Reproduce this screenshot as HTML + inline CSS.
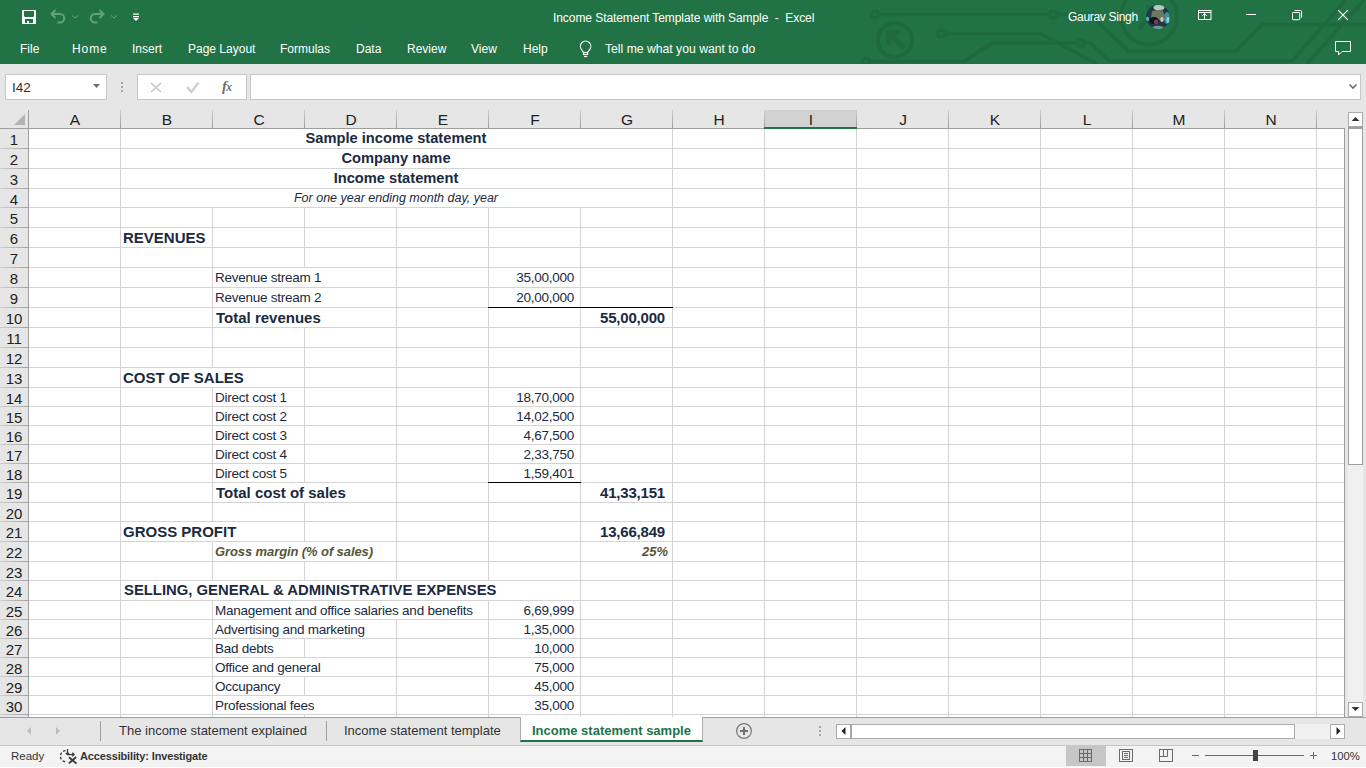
<!DOCTYPE html><html><head><meta charset="utf-8"><style>
*{margin:0;padding:0;box-sizing:border-box}
html,body{width:1366px;height:768px;overflow:hidden;background:#fff;font-family:"Liberation Sans",sans-serif}
.a{position:absolute}
.t{position:absolute;white-space:nowrap}
.rib{color:#fff;font-size:12px}
.cell{color:#1a2a40;font-size:13.5px;letter-spacing:-0.25px}
.cell.b{letter-spacing:0}
.b{font-weight:bold}
.i{font-style:italic}
.hdr{position:absolute;color:#222;font-size:15px;text-align:center}
</style></head><body>
<div class="a" style="left:0;top:0;width:1366px;height:64px;background:#217346"></div>
<svg class="a" style="left:0;top:0" width="1366" height="64" viewBox="0 0 1366 64">
<g fill="none" stroke="#1e693f" stroke-width="3.6">
<path d="M879 14.5 H1049"/><circle cx="875" cy="14.5" r="3.5"/><circle cx="1053" cy="14.5" r="3.5"/>
<path d="M1057 14.5 H1090 L1129 51.5 H1236 L1262 24.5 H1366"/>
<circle cx="895" cy="40" r="17" stroke-width="3.8"/>
<path d="M945 33.5 H1040 L1097 64"/><circle cx="941" cy="33.5" r="3.5"/>
<path d="M870 61.5 H964 L992 43 H1077"/><circle cx="866" cy="61.5" r="3.5"/><circle cx="1081" cy="43" r="3.5"/>
<path d="M1085 43 H1090 L1110 61 H1292 L1346 0"/>
<circle cx="1149" cy="16.5" r="28" stroke-width="3.8"/>
<path d="M1364 0 L1307 64"/>
<path d="M1139 29 L1156 8 M1146 7 H1157 V18" stroke-width="4"/>
</g>
<g fill="#1e693f"><path d="M886 30 L900 30 L900 35 L895 35 L906 46 L902 50 L891 39 L891 44 L886 44 Z"/></g>
</svg>
<svg class="a" style="left:22px;top:10px" width="14" height="14" viewBox="0 0 14 14">
<rect x="0" y="0" width="14" height="14" fill="#fff" rx="0.8"/>
<path d="M2 1 H12 V6 L11 7 H3 L2 6 Z" fill="#217346"/>
<rect x="3" y="9" width="8" height="4" fill="#217346"/>
<rect x="5" y="11" width="2" height="2" fill="#fff"/>
</svg>
<svg class="a" style="left:50px;top:9px" width="70" height="16" viewBox="0 0 70 16">
<g fill="none" stroke="#64a27e" stroke-width="2">
<path d="M1.5 5 H10 A4.25 4.25 0 0 1 10 13.5 H7.5"/><path d="M5.5 1 L1.5 5 L5.5 9"/>
<path d="M22 6.5 L25 9 L28 6.5" stroke-width="1"/>
<path d="M53.5 5 H45 A4.25 4.25 0 0 0 45 13.5 H47.5"/><path d="M49.5 1 L53.5 5 L49.5 9"/>
<path d="M61 6.5 L64 9 L67 6.5" stroke-width="1"/>
</g></svg>
<svg class="a" style="left:132px;top:13px" width="8" height="8" viewBox="0 0 8 8">
<rect x="1" y="0.5" width="6" height="1.2" fill="#fff"/><rect x="1" y="3" width="6" height="1.2" fill="#fff"/>
<path d="M1 5 H7 L4 8 Z" fill="#fff"/></svg>
<div class="t rib" style="left:553px;top:11px;font-size:12px;letter-spacing:-0.07px">Income Statement Template with Sample&nbsp; - &nbsp;Excel</div>
<div class="t rib" style="left:1068px;top:10px;font-size:12px;letter-spacing:-0.3px">Gaurav Singh</div>
<svg class="a" style="left:1146px;top:5px" width="24" height="24" viewBox="0 0 24 24">
<defs><clipPath id="avc"><circle cx="12" cy="12" r="11.9"/></clipPath><filter id="avb" x="-10%" y="-10%" width="120%" height="120%"><feGaussianBlur stdDeviation="0.7"/></filter></defs>
<g clip-path="url(#avc)"><g filter="url(#avb)">
<rect x="0" y="0" width="24" height="24" fill="#1d3b44"/>
<ellipse cx="21" cy="13" rx="3" ry="6" fill="#3f8f9c"/>
<ellipse cx="22" cy="15" rx="1.6" ry="3" fill="#7fd8e4"/>
<ellipse cx="13" cy="2.5" rx="5.5" ry="3.2" fill="#b9c3cb"/>
<path d="M6 6 L16 4.5 L19.5 12 L14 15 L5 13 Z" fill="#6b7860"/>
<ellipse cx="8" cy="15.5" rx="4.5" ry="3.5" fill="#0e1419"/>
<ellipse cx="10" cy="17" rx="2.2" ry="2.4" fill="#8b3352"/>
<ellipse cx="16" cy="14.5" rx="1.7" ry="2.6" fill="#d9cbb3"/>
<ellipse cx="1.5" cy="14" rx="1.6" ry="2.2" fill="#5cb0bc"/>
<ellipse cx="12" cy="23" rx="6" ry="2.2" fill="#6a9a92"/>
</g></g></svg>
<svg class="a" style="left:1190px;top:0" width="176" height="64" viewBox="1190 0 176 64">
<g fill="none" stroke="#fff" stroke-width="1">
<rect x="1198.5" y="10.5" width="12.5" height="9"/><path d="M1198.5 12.5 H1211"/><path d="M1204.5 19.5 V13.5 M1202.2 15.9 L1204.5 13.6 L1206.8 15.9"/>
<path d="M1246 14.5 H1256"/>
<rect x="1292.5" y="12.5" width="7.2" height="7.2" rx="0.6"/><path d="M1294.5 10.5 H1300.5 Q1301.6 10.5 1301.6 11.6 V17.8"/>
<path d="M1338.2 10.2 L1347.8 19.8 M1347.8 10.2 L1338.2 19.8" stroke-width="1.2"/>
<path d="M1335.5 41.5 H1350.5 V51.5 H1342 L1338.5 55 V51.5 H1335.5 Z"/>
</g></svg>
<div class="t rib" style="left:20px;top:42px;letter-spacing:0px">File</div>
<div class="t rib" style="left:72px;top:42px;letter-spacing:0.9px">Home</div>
<div class="t rib" style="left:132px;top:42px;letter-spacing:0px">Insert</div>
<div class="t rib" style="left:188px;top:42px;letter-spacing:0px">Page Layout</div>
<div class="t rib" style="left:280px;top:42px;letter-spacing:0px">Formulas</div>
<div class="t rib" style="left:356px;top:42px;letter-spacing:0px">Data</div>
<div class="t rib" style="left:407px;top:42px;letter-spacing:0px">Review</div>
<div class="t rib" style="left:471px;top:42px;letter-spacing:0px">View</div>
<div class="t rib" style="left:523px;top:42px;letter-spacing:0px">Help</div>
<svg class="a" style="left:570px;top:36px" width="30" height="26" viewBox="570 36 30 26">
<g fill="none" stroke="#fff" stroke-width="1.15"><path d="M583.5 52.5 L581.6 49.6 A5.2 5.2 0 1 1 589.6 49.6 L587.6 52.5 Z"/><rect x="583.5" y="52.5" width="4.1" height="2"/><path d="M584 56.5 H587.2"/></g></svg>
<div class="t rib" style="left:605px;top:42px;font-size:12.2px">Tell me what you want to do</div>
<div class="a" style="left:0;top:64px;width:1366px;height:46px;background:#e6e6e6"></div>
<div class="a" style="left:5px;top:74px;width:102px;height:26px;background:#fff;border:1px solid #c6c6c6"></div>
<div class="t" style="left:12px;top:80px;font-size:13.5px;color:#333">I42</div>
<svg class="a" style="left:93px;top:84px" width="8" height="5" viewBox="0 0 8 5"><path d="M0 0 H7 L3.5 4 Z" fill="#6d6d6d"/></svg>
<div class="a" style="left:121px;top:82px;width:2px;height:2px;background:#a6a6a6"></div>
<div class="a" style="left:121px;top:86px;width:2px;height:2px;background:#a6a6a6"></div>
<div class="a" style="left:121px;top:90px;width:2px;height:2px;background:#a6a6a6"></div>
<div class="a" style="left:137px;top:74px;width:110px;height:26px;background:#fff;border:1px solid #c6c6c6"></div>
<svg class="a" style="left:148px;top:80px" width="90" height="15" viewBox="148 80 90 15">
<g fill="none" stroke="#c3c3c3" stroke-width="1.4"><path d="M151 83 L161 92 M161 83 L151 92"/>
<path d="M187 87 L191.5 92 L198.5 82.5" stroke-width="2.2" stroke="#cdcdcd"/></g></svg>
<div class="t" style="left:222px;top:78px;font-family:'Liberation Serif',serif;font-style:italic;font-size:15px;color:#707070;font-weight:bold;letter-spacing:-0.8px">f<span style="font-size:11.5px">x</span></div>
<div class="a" style="left:250px;top:74px;width:1111px;height:26px;background:#fff;border:1px solid #c6c6c6"></div>
<svg class="a" style="left:1348px;top:83px" width="10" height="8" viewBox="0 0 10 8"><path d="M1.5 1.5 L5 5 L8.5 1.5" fill="none" stroke="#6d6d6d" stroke-width="1.6"/></svg>
<div class="a" style="left:0;top:110px;width:1344px;height:18px;background:#e6e6e6"></div>
<div class="a" style="left:0;top:128px;width:28px;height:589px;background:#e6e6e6"></div>
<div class="a" style="left:29px;top:129px;width:1315px;height:588px;background:#fff"></div>
<svg class="a" style="left:14px;top:114px" width="12" height="12" viewBox="0 0 12 12"><path d="M11 0 V11 H0 Z" fill="#b4b4b4"/></svg>
<div class="a" style="left:765px;top:110px;width:91px;height:17px;background:#d2d2d2"></div>
<svg class="a" style="left:0;top:0" width="1366" height="768" viewBox="0 0 1366 768">
<rect x="29" y="148" width="1315" height="1" fill="#d4d4d4"/>
<rect x="29" y="168" width="1315" height="1" fill="#d4d4d4"/>
<rect x="29" y="188" width="1315" height="1" fill="#d4d4d4"/>
<rect x="29" y="207" width="1315" height="1" fill="#d4d4d4"/>
<rect x="29" y="227" width="1315" height="1" fill="#d4d4d4"/>
<rect x="29" y="247" width="1315" height="1" fill="#d4d4d4"/>
<rect x="29" y="267" width="1315" height="1" fill="#d4d4d4"/>
<rect x="29" y="287" width="1315" height="1" fill="#d4d4d4"/>
<rect x="29" y="307" width="1315" height="1" fill="#d4d4d4"/>
<rect x="29" y="327" width="1315" height="1" fill="#d4d4d4"/>
<rect x="29" y="347" width="1315" height="1" fill="#d4d4d4"/>
<rect x="29" y="367" width="1315" height="1" fill="#d4d4d4"/>
<rect x="29" y="387" width="1315" height="1" fill="#d4d4d4"/>
<rect x="29" y="406" width="1315" height="1" fill="#d4d4d4"/>
<rect x="29" y="425" width="1315" height="1" fill="#d4d4d4"/>
<rect x="29" y="444" width="1315" height="1" fill="#d4d4d4"/>
<rect x="29" y="463" width="1315" height="1" fill="#d4d4d4"/>
<rect x="29" y="482" width="1315" height="1" fill="#d4d4d4"/>
<rect x="29" y="502" width="1315" height="1" fill="#d4d4d4"/>
<rect x="29" y="521" width="1315" height="1" fill="#d4d4d4"/>
<rect x="29" y="541" width="1315" height="1" fill="#d4d4d4"/>
<rect x="29" y="561" width="1315" height="1" fill="#d4d4d4"/>
<rect x="29" y="580" width="1315" height="1" fill="#d4d4d4"/>
<rect x="29" y="600" width="1315" height="1" fill="#d4d4d4"/>
<rect x="29" y="619" width="1315" height="1" fill="#d4d4d4"/>
<rect x="29" y="638" width="1315" height="1" fill="#d4d4d4"/>
<rect x="29" y="657" width="1315" height="1" fill="#d4d4d4"/>
<rect x="29" y="676" width="1315" height="1" fill="#d4d4d4"/>
<rect x="29" y="695" width="1315" height="1" fill="#d4d4d4"/>
<rect x="29" y="714" width="1315" height="1" fill="#d4d4d4"/>
<rect x="120" y="129" width="1" height="19" fill="#d4d4d4"/>
<rect x="120" y="149" width="1" height="19" fill="#d4d4d4"/>
<rect x="120" y="169" width="1" height="19" fill="#d4d4d4"/>
<rect x="120" y="189" width="1" height="18" fill="#d4d4d4"/>
<rect x="120" y="208" width="1" height="19" fill="#d4d4d4"/>
<rect x="120" y="228" width="1" height="19" fill="#d4d4d4"/>
<rect x="120" y="248" width="1" height="19" fill="#d4d4d4"/>
<rect x="120" y="268" width="1" height="19" fill="#d4d4d4"/>
<rect x="120" y="288" width="1" height="19" fill="#d4d4d4"/>
<rect x="120" y="308" width="1" height="19" fill="#d4d4d4"/>
<rect x="120" y="328" width="1" height="19" fill="#d4d4d4"/>
<rect x="120" y="348" width="1" height="19" fill="#d4d4d4"/>
<rect x="120" y="368" width="1" height="19" fill="#d4d4d4"/>
<rect x="120" y="388" width="1" height="18" fill="#d4d4d4"/>
<rect x="120" y="407" width="1" height="18" fill="#d4d4d4"/>
<rect x="120" y="426" width="1" height="18" fill="#d4d4d4"/>
<rect x="120" y="445" width="1" height="18" fill="#d4d4d4"/>
<rect x="120" y="464" width="1" height="18" fill="#d4d4d4"/>
<rect x="120" y="483" width="1" height="19" fill="#d4d4d4"/>
<rect x="120" y="503" width="1" height="18" fill="#d4d4d4"/>
<rect x="120" y="522" width="1" height="19" fill="#d4d4d4"/>
<rect x="120" y="542" width="1" height="19" fill="#d4d4d4"/>
<rect x="120" y="562" width="1" height="18" fill="#d4d4d4"/>
<rect x="120" y="581" width="1" height="19" fill="#d4d4d4"/>
<rect x="120" y="601" width="1" height="18" fill="#d4d4d4"/>
<rect x="120" y="620" width="1" height="18" fill="#d4d4d4"/>
<rect x="120" y="639" width="1" height="18" fill="#d4d4d4"/>
<rect x="120" y="658" width="1" height="18" fill="#d4d4d4"/>
<rect x="120" y="677" width="1" height="18" fill="#d4d4d4"/>
<rect x="120" y="696" width="1" height="18" fill="#d4d4d4"/>
<rect x="120" y="715" width="1" height="2" fill="#d4d4d4"/>
<rect x="212" y="208" width="1" height="19" fill="#d4d4d4"/>
<rect x="212" y="228" width="1" height="19" fill="#d4d4d4"/>
<rect x="212" y="248" width="1" height="19" fill="#d4d4d4"/>
<rect x="212" y="268" width="1" height="19" fill="#d4d4d4"/>
<rect x="212" y="288" width="1" height="19" fill="#d4d4d4"/>
<rect x="212" y="308" width="1" height="19" fill="#d4d4d4"/>
<rect x="212" y="328" width="1" height="19" fill="#d4d4d4"/>
<rect x="212" y="348" width="1" height="19" fill="#d4d4d4"/>
<rect x="212" y="388" width="1" height="18" fill="#d4d4d4"/>
<rect x="212" y="407" width="1" height="18" fill="#d4d4d4"/>
<rect x="212" y="426" width="1" height="18" fill="#d4d4d4"/>
<rect x="212" y="445" width="1" height="18" fill="#d4d4d4"/>
<rect x="212" y="464" width="1" height="18" fill="#d4d4d4"/>
<rect x="212" y="483" width="1" height="19" fill="#d4d4d4"/>
<rect x="212" y="503" width="1" height="18" fill="#d4d4d4"/>
<rect x="212" y="542" width="1" height="19" fill="#d4d4d4"/>
<rect x="212" y="562" width="1" height="18" fill="#d4d4d4"/>
<rect x="212" y="601" width="1" height="18" fill="#d4d4d4"/>
<rect x="212" y="620" width="1" height="18" fill="#d4d4d4"/>
<rect x="212" y="639" width="1" height="18" fill="#d4d4d4"/>
<rect x="212" y="658" width="1" height="18" fill="#d4d4d4"/>
<rect x="212" y="677" width="1" height="18" fill="#d4d4d4"/>
<rect x="212" y="696" width="1" height="18" fill="#d4d4d4"/>
<rect x="212" y="715" width="1" height="2" fill="#d4d4d4"/>
<rect x="304" y="208" width="1" height="19" fill="#d4d4d4"/>
<rect x="304" y="228" width="1" height="19" fill="#d4d4d4"/>
<rect x="304" y="248" width="1" height="19" fill="#d4d4d4"/>
<rect x="304" y="328" width="1" height="19" fill="#d4d4d4"/>
<rect x="304" y="348" width="1" height="19" fill="#d4d4d4"/>
<rect x="304" y="368" width="1" height="19" fill="#d4d4d4"/>
<rect x="304" y="388" width="1" height="18" fill="#d4d4d4"/>
<rect x="304" y="407" width="1" height="18" fill="#d4d4d4"/>
<rect x="304" y="426" width="1" height="18" fill="#d4d4d4"/>
<rect x="304" y="445" width="1" height="18" fill="#d4d4d4"/>
<rect x="304" y="464" width="1" height="18" fill="#d4d4d4"/>
<rect x="304" y="503" width="1" height="18" fill="#d4d4d4"/>
<rect x="304" y="522" width="1" height="19" fill="#d4d4d4"/>
<rect x="304" y="562" width="1" height="18" fill="#d4d4d4"/>
<rect x="304" y="639" width="1" height="18" fill="#d4d4d4"/>
<rect x="304" y="677" width="1" height="18" fill="#d4d4d4"/>
<rect x="304" y="715" width="1" height="2" fill="#d4d4d4"/>
<rect x="396" y="208" width="1" height="19" fill="#d4d4d4"/>
<rect x="396" y="228" width="1" height="19" fill="#d4d4d4"/>
<rect x="396" y="248" width="1" height="19" fill="#d4d4d4"/>
<rect x="396" y="268" width="1" height="19" fill="#d4d4d4"/>
<rect x="396" y="288" width="1" height="19" fill="#d4d4d4"/>
<rect x="396" y="308" width="1" height="19" fill="#d4d4d4"/>
<rect x="396" y="328" width="1" height="19" fill="#d4d4d4"/>
<rect x="396" y="348" width="1" height="19" fill="#d4d4d4"/>
<rect x="396" y="368" width="1" height="19" fill="#d4d4d4"/>
<rect x="396" y="388" width="1" height="18" fill="#d4d4d4"/>
<rect x="396" y="407" width="1" height="18" fill="#d4d4d4"/>
<rect x="396" y="426" width="1" height="18" fill="#d4d4d4"/>
<rect x="396" y="445" width="1" height="18" fill="#d4d4d4"/>
<rect x="396" y="464" width="1" height="18" fill="#d4d4d4"/>
<rect x="396" y="483" width="1" height="19" fill="#d4d4d4"/>
<rect x="396" y="503" width="1" height="18" fill="#d4d4d4"/>
<rect x="396" y="522" width="1" height="19" fill="#d4d4d4"/>
<rect x="396" y="542" width="1" height="19" fill="#d4d4d4"/>
<rect x="396" y="562" width="1" height="18" fill="#d4d4d4"/>
<rect x="396" y="620" width="1" height="18" fill="#d4d4d4"/>
<rect x="396" y="639" width="1" height="18" fill="#d4d4d4"/>
<rect x="396" y="658" width="1" height="18" fill="#d4d4d4"/>
<rect x="396" y="677" width="1" height="18" fill="#d4d4d4"/>
<rect x="396" y="696" width="1" height="18" fill="#d4d4d4"/>
<rect x="396" y="715" width="1" height="2" fill="#d4d4d4"/>
<rect x="488" y="208" width="1" height="19" fill="#d4d4d4"/>
<rect x="488" y="228" width="1" height="19" fill="#d4d4d4"/>
<rect x="488" y="248" width="1" height="19" fill="#d4d4d4"/>
<rect x="488" y="268" width="1" height="19" fill="#d4d4d4"/>
<rect x="488" y="288" width="1" height="19" fill="#d4d4d4"/>
<rect x="488" y="308" width="1" height="19" fill="#d4d4d4"/>
<rect x="488" y="328" width="1" height="19" fill="#d4d4d4"/>
<rect x="488" y="348" width="1" height="19" fill="#d4d4d4"/>
<rect x="488" y="368" width="1" height="19" fill="#d4d4d4"/>
<rect x="488" y="388" width="1" height="18" fill="#d4d4d4"/>
<rect x="488" y="407" width="1" height="18" fill="#d4d4d4"/>
<rect x="488" y="426" width="1" height="18" fill="#d4d4d4"/>
<rect x="488" y="445" width="1" height="18" fill="#d4d4d4"/>
<rect x="488" y="464" width="1" height="18" fill="#d4d4d4"/>
<rect x="488" y="483" width="1" height="19" fill="#d4d4d4"/>
<rect x="488" y="503" width="1" height="18" fill="#d4d4d4"/>
<rect x="488" y="522" width="1" height="19" fill="#d4d4d4"/>
<rect x="488" y="542" width="1" height="19" fill="#d4d4d4"/>
<rect x="488" y="562" width="1" height="18" fill="#d4d4d4"/>
<rect x="488" y="601" width="1" height="18" fill="#d4d4d4"/>
<rect x="488" y="620" width="1" height="18" fill="#d4d4d4"/>
<rect x="488" y="639" width="1" height="18" fill="#d4d4d4"/>
<rect x="488" y="658" width="1" height="18" fill="#d4d4d4"/>
<rect x="488" y="677" width="1" height="18" fill="#d4d4d4"/>
<rect x="488" y="696" width="1" height="18" fill="#d4d4d4"/>
<rect x="488" y="715" width="1" height="2" fill="#d4d4d4"/>
<rect x="580" y="208" width="1" height="19" fill="#d4d4d4"/>
<rect x="580" y="228" width="1" height="19" fill="#d4d4d4"/>
<rect x="580" y="248" width="1" height="19" fill="#d4d4d4"/>
<rect x="580" y="268" width="1" height="19" fill="#d4d4d4"/>
<rect x="580" y="288" width="1" height="19" fill="#d4d4d4"/>
<rect x="580" y="308" width="1" height="19" fill="#d4d4d4"/>
<rect x="580" y="328" width="1" height="19" fill="#d4d4d4"/>
<rect x="580" y="348" width="1" height="19" fill="#d4d4d4"/>
<rect x="580" y="368" width="1" height="19" fill="#d4d4d4"/>
<rect x="580" y="388" width="1" height="18" fill="#d4d4d4"/>
<rect x="580" y="407" width="1" height="18" fill="#d4d4d4"/>
<rect x="580" y="426" width="1" height="18" fill="#d4d4d4"/>
<rect x="580" y="445" width="1" height="18" fill="#d4d4d4"/>
<rect x="580" y="464" width="1" height="18" fill="#d4d4d4"/>
<rect x="580" y="483" width="1" height="19" fill="#d4d4d4"/>
<rect x="580" y="503" width="1" height="18" fill="#d4d4d4"/>
<rect x="580" y="522" width="1" height="19" fill="#d4d4d4"/>
<rect x="580" y="542" width="1" height="19" fill="#d4d4d4"/>
<rect x="580" y="562" width="1" height="18" fill="#d4d4d4"/>
<rect x="580" y="581" width="1" height="19" fill="#d4d4d4"/>
<rect x="580" y="601" width="1" height="18" fill="#d4d4d4"/>
<rect x="580" y="620" width="1" height="18" fill="#d4d4d4"/>
<rect x="580" y="639" width="1" height="18" fill="#d4d4d4"/>
<rect x="580" y="658" width="1" height="18" fill="#d4d4d4"/>
<rect x="580" y="677" width="1" height="18" fill="#d4d4d4"/>
<rect x="580" y="696" width="1" height="18" fill="#d4d4d4"/>
<rect x="580" y="715" width="1" height="2" fill="#d4d4d4"/>
<rect x="672" y="129" width="1" height="19" fill="#d4d4d4"/>
<rect x="672" y="149" width="1" height="19" fill="#d4d4d4"/>
<rect x="672" y="169" width="1" height="19" fill="#d4d4d4"/>
<rect x="672" y="189" width="1" height="18" fill="#d4d4d4"/>
<rect x="672" y="208" width="1" height="19" fill="#d4d4d4"/>
<rect x="672" y="228" width="1" height="19" fill="#d4d4d4"/>
<rect x="672" y="248" width="1" height="19" fill="#d4d4d4"/>
<rect x="672" y="268" width="1" height="19" fill="#d4d4d4"/>
<rect x="672" y="288" width="1" height="19" fill="#d4d4d4"/>
<rect x="672" y="308" width="1" height="19" fill="#d4d4d4"/>
<rect x="672" y="328" width="1" height="19" fill="#d4d4d4"/>
<rect x="672" y="348" width="1" height="19" fill="#d4d4d4"/>
<rect x="672" y="368" width="1" height="19" fill="#d4d4d4"/>
<rect x="672" y="388" width="1" height="18" fill="#d4d4d4"/>
<rect x="672" y="407" width="1" height="18" fill="#d4d4d4"/>
<rect x="672" y="426" width="1" height="18" fill="#d4d4d4"/>
<rect x="672" y="445" width="1" height="18" fill="#d4d4d4"/>
<rect x="672" y="464" width="1" height="18" fill="#d4d4d4"/>
<rect x="672" y="483" width="1" height="19" fill="#d4d4d4"/>
<rect x="672" y="503" width="1" height="18" fill="#d4d4d4"/>
<rect x="672" y="522" width="1" height="19" fill="#d4d4d4"/>
<rect x="672" y="542" width="1" height="19" fill="#d4d4d4"/>
<rect x="672" y="562" width="1" height="18" fill="#d4d4d4"/>
<rect x="672" y="581" width="1" height="19" fill="#d4d4d4"/>
<rect x="672" y="601" width="1" height="18" fill="#d4d4d4"/>
<rect x="672" y="620" width="1" height="18" fill="#d4d4d4"/>
<rect x="672" y="639" width="1" height="18" fill="#d4d4d4"/>
<rect x="672" y="658" width="1" height="18" fill="#d4d4d4"/>
<rect x="672" y="677" width="1" height="18" fill="#d4d4d4"/>
<rect x="672" y="696" width="1" height="18" fill="#d4d4d4"/>
<rect x="672" y="715" width="1" height="2" fill="#d4d4d4"/>
<rect x="764" y="129" width="1" height="19" fill="#d4d4d4"/>
<rect x="764" y="149" width="1" height="19" fill="#d4d4d4"/>
<rect x="764" y="169" width="1" height="19" fill="#d4d4d4"/>
<rect x="764" y="189" width="1" height="18" fill="#d4d4d4"/>
<rect x="764" y="208" width="1" height="19" fill="#d4d4d4"/>
<rect x="764" y="228" width="1" height="19" fill="#d4d4d4"/>
<rect x="764" y="248" width="1" height="19" fill="#d4d4d4"/>
<rect x="764" y="268" width="1" height="19" fill="#d4d4d4"/>
<rect x="764" y="288" width="1" height="19" fill="#d4d4d4"/>
<rect x="764" y="308" width="1" height="19" fill="#d4d4d4"/>
<rect x="764" y="328" width="1" height="19" fill="#d4d4d4"/>
<rect x="764" y="348" width="1" height="19" fill="#d4d4d4"/>
<rect x="764" y="368" width="1" height="19" fill="#d4d4d4"/>
<rect x="764" y="388" width="1" height="18" fill="#d4d4d4"/>
<rect x="764" y="407" width="1" height="18" fill="#d4d4d4"/>
<rect x="764" y="426" width="1" height="18" fill="#d4d4d4"/>
<rect x="764" y="445" width="1" height="18" fill="#d4d4d4"/>
<rect x="764" y="464" width="1" height="18" fill="#d4d4d4"/>
<rect x="764" y="483" width="1" height="19" fill="#d4d4d4"/>
<rect x="764" y="503" width="1" height="18" fill="#d4d4d4"/>
<rect x="764" y="522" width="1" height="19" fill="#d4d4d4"/>
<rect x="764" y="542" width="1" height="19" fill="#d4d4d4"/>
<rect x="764" y="562" width="1" height="18" fill="#d4d4d4"/>
<rect x="764" y="581" width="1" height="19" fill="#d4d4d4"/>
<rect x="764" y="601" width="1" height="18" fill="#d4d4d4"/>
<rect x="764" y="620" width="1" height="18" fill="#d4d4d4"/>
<rect x="764" y="639" width="1" height="18" fill="#d4d4d4"/>
<rect x="764" y="658" width="1" height="18" fill="#d4d4d4"/>
<rect x="764" y="677" width="1" height="18" fill="#d4d4d4"/>
<rect x="764" y="696" width="1" height="18" fill="#d4d4d4"/>
<rect x="764" y="715" width="1" height="2" fill="#d4d4d4"/>
<rect x="856" y="129" width="1" height="19" fill="#d4d4d4"/>
<rect x="856" y="149" width="1" height="19" fill="#d4d4d4"/>
<rect x="856" y="169" width="1" height="19" fill="#d4d4d4"/>
<rect x="856" y="189" width="1" height="18" fill="#d4d4d4"/>
<rect x="856" y="208" width="1" height="19" fill="#d4d4d4"/>
<rect x="856" y="228" width="1" height="19" fill="#d4d4d4"/>
<rect x="856" y="248" width="1" height="19" fill="#d4d4d4"/>
<rect x="856" y="268" width="1" height="19" fill="#d4d4d4"/>
<rect x="856" y="288" width="1" height="19" fill="#d4d4d4"/>
<rect x="856" y="308" width="1" height="19" fill="#d4d4d4"/>
<rect x="856" y="328" width="1" height="19" fill="#d4d4d4"/>
<rect x="856" y="348" width="1" height="19" fill="#d4d4d4"/>
<rect x="856" y="368" width="1" height="19" fill="#d4d4d4"/>
<rect x="856" y="388" width="1" height="18" fill="#d4d4d4"/>
<rect x="856" y="407" width="1" height="18" fill="#d4d4d4"/>
<rect x="856" y="426" width="1" height="18" fill="#d4d4d4"/>
<rect x="856" y="445" width="1" height="18" fill="#d4d4d4"/>
<rect x="856" y="464" width="1" height="18" fill="#d4d4d4"/>
<rect x="856" y="483" width="1" height="19" fill="#d4d4d4"/>
<rect x="856" y="503" width="1" height="18" fill="#d4d4d4"/>
<rect x="856" y="522" width="1" height="19" fill="#d4d4d4"/>
<rect x="856" y="542" width="1" height="19" fill="#d4d4d4"/>
<rect x="856" y="562" width="1" height="18" fill="#d4d4d4"/>
<rect x="856" y="581" width="1" height="19" fill="#d4d4d4"/>
<rect x="856" y="601" width="1" height="18" fill="#d4d4d4"/>
<rect x="856" y="620" width="1" height="18" fill="#d4d4d4"/>
<rect x="856" y="639" width="1" height="18" fill="#d4d4d4"/>
<rect x="856" y="658" width="1" height="18" fill="#d4d4d4"/>
<rect x="856" y="677" width="1" height="18" fill="#d4d4d4"/>
<rect x="856" y="696" width="1" height="18" fill="#d4d4d4"/>
<rect x="856" y="715" width="1" height="2" fill="#d4d4d4"/>
<rect x="948" y="129" width="1" height="19" fill="#d4d4d4"/>
<rect x="948" y="149" width="1" height="19" fill="#d4d4d4"/>
<rect x="948" y="169" width="1" height="19" fill="#d4d4d4"/>
<rect x="948" y="189" width="1" height="18" fill="#d4d4d4"/>
<rect x="948" y="208" width="1" height="19" fill="#d4d4d4"/>
<rect x="948" y="228" width="1" height="19" fill="#d4d4d4"/>
<rect x="948" y="248" width="1" height="19" fill="#d4d4d4"/>
<rect x="948" y="268" width="1" height="19" fill="#d4d4d4"/>
<rect x="948" y="288" width="1" height="19" fill="#d4d4d4"/>
<rect x="948" y="308" width="1" height="19" fill="#d4d4d4"/>
<rect x="948" y="328" width="1" height="19" fill="#d4d4d4"/>
<rect x="948" y="348" width="1" height="19" fill="#d4d4d4"/>
<rect x="948" y="368" width="1" height="19" fill="#d4d4d4"/>
<rect x="948" y="388" width="1" height="18" fill="#d4d4d4"/>
<rect x="948" y="407" width="1" height="18" fill="#d4d4d4"/>
<rect x="948" y="426" width="1" height="18" fill="#d4d4d4"/>
<rect x="948" y="445" width="1" height="18" fill="#d4d4d4"/>
<rect x="948" y="464" width="1" height="18" fill="#d4d4d4"/>
<rect x="948" y="483" width="1" height="19" fill="#d4d4d4"/>
<rect x="948" y="503" width="1" height="18" fill="#d4d4d4"/>
<rect x="948" y="522" width="1" height="19" fill="#d4d4d4"/>
<rect x="948" y="542" width="1" height="19" fill="#d4d4d4"/>
<rect x="948" y="562" width="1" height="18" fill="#d4d4d4"/>
<rect x="948" y="581" width="1" height="19" fill="#d4d4d4"/>
<rect x="948" y="601" width="1" height="18" fill="#d4d4d4"/>
<rect x="948" y="620" width="1" height="18" fill="#d4d4d4"/>
<rect x="948" y="639" width="1" height="18" fill="#d4d4d4"/>
<rect x="948" y="658" width="1" height="18" fill="#d4d4d4"/>
<rect x="948" y="677" width="1" height="18" fill="#d4d4d4"/>
<rect x="948" y="696" width="1" height="18" fill="#d4d4d4"/>
<rect x="948" y="715" width="1" height="2" fill="#d4d4d4"/>
<rect x="1040" y="129" width="1" height="19" fill="#d4d4d4"/>
<rect x="1040" y="149" width="1" height="19" fill="#d4d4d4"/>
<rect x="1040" y="169" width="1" height="19" fill="#d4d4d4"/>
<rect x="1040" y="189" width="1" height="18" fill="#d4d4d4"/>
<rect x="1040" y="208" width="1" height="19" fill="#d4d4d4"/>
<rect x="1040" y="228" width="1" height="19" fill="#d4d4d4"/>
<rect x="1040" y="248" width="1" height="19" fill="#d4d4d4"/>
<rect x="1040" y="268" width="1" height="19" fill="#d4d4d4"/>
<rect x="1040" y="288" width="1" height="19" fill="#d4d4d4"/>
<rect x="1040" y="308" width="1" height="19" fill="#d4d4d4"/>
<rect x="1040" y="328" width="1" height="19" fill="#d4d4d4"/>
<rect x="1040" y="348" width="1" height="19" fill="#d4d4d4"/>
<rect x="1040" y="368" width="1" height="19" fill="#d4d4d4"/>
<rect x="1040" y="388" width="1" height="18" fill="#d4d4d4"/>
<rect x="1040" y="407" width="1" height="18" fill="#d4d4d4"/>
<rect x="1040" y="426" width="1" height="18" fill="#d4d4d4"/>
<rect x="1040" y="445" width="1" height="18" fill="#d4d4d4"/>
<rect x="1040" y="464" width="1" height="18" fill="#d4d4d4"/>
<rect x="1040" y="483" width="1" height="19" fill="#d4d4d4"/>
<rect x="1040" y="503" width="1" height="18" fill="#d4d4d4"/>
<rect x="1040" y="522" width="1" height="19" fill="#d4d4d4"/>
<rect x="1040" y="542" width="1" height="19" fill="#d4d4d4"/>
<rect x="1040" y="562" width="1" height="18" fill="#d4d4d4"/>
<rect x="1040" y="581" width="1" height="19" fill="#d4d4d4"/>
<rect x="1040" y="601" width="1" height="18" fill="#d4d4d4"/>
<rect x="1040" y="620" width="1" height="18" fill="#d4d4d4"/>
<rect x="1040" y="639" width="1" height="18" fill="#d4d4d4"/>
<rect x="1040" y="658" width="1" height="18" fill="#d4d4d4"/>
<rect x="1040" y="677" width="1" height="18" fill="#d4d4d4"/>
<rect x="1040" y="696" width="1" height="18" fill="#d4d4d4"/>
<rect x="1040" y="715" width="1" height="2" fill="#d4d4d4"/>
<rect x="1132" y="129" width="1" height="19" fill="#d4d4d4"/>
<rect x="1132" y="149" width="1" height="19" fill="#d4d4d4"/>
<rect x="1132" y="169" width="1" height="19" fill="#d4d4d4"/>
<rect x="1132" y="189" width="1" height="18" fill="#d4d4d4"/>
<rect x="1132" y="208" width="1" height="19" fill="#d4d4d4"/>
<rect x="1132" y="228" width="1" height="19" fill="#d4d4d4"/>
<rect x="1132" y="248" width="1" height="19" fill="#d4d4d4"/>
<rect x="1132" y="268" width="1" height="19" fill="#d4d4d4"/>
<rect x="1132" y="288" width="1" height="19" fill="#d4d4d4"/>
<rect x="1132" y="308" width="1" height="19" fill="#d4d4d4"/>
<rect x="1132" y="328" width="1" height="19" fill="#d4d4d4"/>
<rect x="1132" y="348" width="1" height="19" fill="#d4d4d4"/>
<rect x="1132" y="368" width="1" height="19" fill="#d4d4d4"/>
<rect x="1132" y="388" width="1" height="18" fill="#d4d4d4"/>
<rect x="1132" y="407" width="1" height="18" fill="#d4d4d4"/>
<rect x="1132" y="426" width="1" height="18" fill="#d4d4d4"/>
<rect x="1132" y="445" width="1" height="18" fill="#d4d4d4"/>
<rect x="1132" y="464" width="1" height="18" fill="#d4d4d4"/>
<rect x="1132" y="483" width="1" height="19" fill="#d4d4d4"/>
<rect x="1132" y="503" width="1" height="18" fill="#d4d4d4"/>
<rect x="1132" y="522" width="1" height="19" fill="#d4d4d4"/>
<rect x="1132" y="542" width="1" height="19" fill="#d4d4d4"/>
<rect x="1132" y="562" width="1" height="18" fill="#d4d4d4"/>
<rect x="1132" y="581" width="1" height="19" fill="#d4d4d4"/>
<rect x="1132" y="601" width="1" height="18" fill="#d4d4d4"/>
<rect x="1132" y="620" width="1" height="18" fill="#d4d4d4"/>
<rect x="1132" y="639" width="1" height="18" fill="#d4d4d4"/>
<rect x="1132" y="658" width="1" height="18" fill="#d4d4d4"/>
<rect x="1132" y="677" width="1" height="18" fill="#d4d4d4"/>
<rect x="1132" y="696" width="1" height="18" fill="#d4d4d4"/>
<rect x="1132" y="715" width="1" height="2" fill="#d4d4d4"/>
<rect x="1224" y="129" width="1" height="19" fill="#d4d4d4"/>
<rect x="1224" y="149" width="1" height="19" fill="#d4d4d4"/>
<rect x="1224" y="169" width="1" height="19" fill="#d4d4d4"/>
<rect x="1224" y="189" width="1" height="18" fill="#d4d4d4"/>
<rect x="1224" y="208" width="1" height="19" fill="#d4d4d4"/>
<rect x="1224" y="228" width="1" height="19" fill="#d4d4d4"/>
<rect x="1224" y="248" width="1" height="19" fill="#d4d4d4"/>
<rect x="1224" y="268" width="1" height="19" fill="#d4d4d4"/>
<rect x="1224" y="288" width="1" height="19" fill="#d4d4d4"/>
<rect x="1224" y="308" width="1" height="19" fill="#d4d4d4"/>
<rect x="1224" y="328" width="1" height="19" fill="#d4d4d4"/>
<rect x="1224" y="348" width="1" height="19" fill="#d4d4d4"/>
<rect x="1224" y="368" width="1" height="19" fill="#d4d4d4"/>
<rect x="1224" y="388" width="1" height="18" fill="#d4d4d4"/>
<rect x="1224" y="407" width="1" height="18" fill="#d4d4d4"/>
<rect x="1224" y="426" width="1" height="18" fill="#d4d4d4"/>
<rect x="1224" y="445" width="1" height="18" fill="#d4d4d4"/>
<rect x="1224" y="464" width="1" height="18" fill="#d4d4d4"/>
<rect x="1224" y="483" width="1" height="19" fill="#d4d4d4"/>
<rect x="1224" y="503" width="1" height="18" fill="#d4d4d4"/>
<rect x="1224" y="522" width="1" height="19" fill="#d4d4d4"/>
<rect x="1224" y="542" width="1" height="19" fill="#d4d4d4"/>
<rect x="1224" y="562" width="1" height="18" fill="#d4d4d4"/>
<rect x="1224" y="581" width="1" height="19" fill="#d4d4d4"/>
<rect x="1224" y="601" width="1" height="18" fill="#d4d4d4"/>
<rect x="1224" y="620" width="1" height="18" fill="#d4d4d4"/>
<rect x="1224" y="639" width="1" height="18" fill="#d4d4d4"/>
<rect x="1224" y="658" width="1" height="18" fill="#d4d4d4"/>
<rect x="1224" y="677" width="1" height="18" fill="#d4d4d4"/>
<rect x="1224" y="696" width="1" height="18" fill="#d4d4d4"/>
<rect x="1224" y="715" width="1" height="2" fill="#d4d4d4"/>
<rect x="1316" y="129" width="1" height="19" fill="#d4d4d4"/>
<rect x="1316" y="149" width="1" height="19" fill="#d4d4d4"/>
<rect x="1316" y="169" width="1" height="19" fill="#d4d4d4"/>
<rect x="1316" y="189" width="1" height="18" fill="#d4d4d4"/>
<rect x="1316" y="208" width="1" height="19" fill="#d4d4d4"/>
<rect x="1316" y="228" width="1" height="19" fill="#d4d4d4"/>
<rect x="1316" y="248" width="1" height="19" fill="#d4d4d4"/>
<rect x="1316" y="268" width="1" height="19" fill="#d4d4d4"/>
<rect x="1316" y="288" width="1" height="19" fill="#d4d4d4"/>
<rect x="1316" y="308" width="1" height="19" fill="#d4d4d4"/>
<rect x="1316" y="328" width="1" height="19" fill="#d4d4d4"/>
<rect x="1316" y="348" width="1" height="19" fill="#d4d4d4"/>
<rect x="1316" y="368" width="1" height="19" fill="#d4d4d4"/>
<rect x="1316" y="388" width="1" height="18" fill="#d4d4d4"/>
<rect x="1316" y="407" width="1" height="18" fill="#d4d4d4"/>
<rect x="1316" y="426" width="1" height="18" fill="#d4d4d4"/>
<rect x="1316" y="445" width="1" height="18" fill="#d4d4d4"/>
<rect x="1316" y="464" width="1" height="18" fill="#d4d4d4"/>
<rect x="1316" y="483" width="1" height="19" fill="#d4d4d4"/>
<rect x="1316" y="503" width="1" height="18" fill="#d4d4d4"/>
<rect x="1316" y="522" width="1" height="19" fill="#d4d4d4"/>
<rect x="1316" y="542" width="1" height="19" fill="#d4d4d4"/>
<rect x="1316" y="562" width="1" height="18" fill="#d4d4d4"/>
<rect x="1316" y="581" width="1" height="19" fill="#d4d4d4"/>
<rect x="1316" y="601" width="1" height="18" fill="#d4d4d4"/>
<rect x="1316" y="620" width="1" height="18" fill="#d4d4d4"/>
<rect x="1316" y="639" width="1" height="18" fill="#d4d4d4"/>
<rect x="1316" y="658" width="1" height="18" fill="#d4d4d4"/>
<rect x="1316" y="677" width="1" height="18" fill="#d4d4d4"/>
<rect x="1316" y="696" width="1" height="18" fill="#d4d4d4"/>
<rect x="1316" y="715" width="1" height="2" fill="#d4d4d4"/>
<defs><linearGradient id="gv" x1="0" y1="0" x2="0" y2="1"><stop offset="0" stop-color="#d0d0d0"/><stop offset="1" stop-color="#9c9c9c"/></linearGradient><linearGradient id="gh" x1="0" y1="0" x2="1" y2="0"><stop offset="0" stop-color="#cfcfcf"/><stop offset="1" stop-color="#a2a2a2"/></linearGradient></defs>
<rect x="120" y="110" width="1" height="18" fill="url(#gv)"/>
<rect x="212" y="110" width="1" height="18" fill="url(#gv)"/>
<rect x="304" y="110" width="1" height="18" fill="url(#gv)"/>
<rect x="396" y="110" width="1" height="18" fill="url(#gv)"/>
<rect x="488" y="110" width="1" height="18" fill="url(#gv)"/>
<rect x="580" y="110" width="1" height="18" fill="url(#gv)"/>
<rect x="672" y="110" width="1" height="18" fill="url(#gv)"/>
<rect x="764" y="110" width="1" height="18" fill="url(#gv)"/>
<rect x="856" y="110" width="1" height="18" fill="url(#gv)"/>
<rect x="948" y="110" width="1" height="18" fill="url(#gv)"/>
<rect x="1040" y="110" width="1" height="18" fill="url(#gv)"/>
<rect x="1132" y="110" width="1" height="18" fill="url(#gv)"/>
<rect x="1224" y="110" width="1" height="18" fill="url(#gv)"/>
<rect x="1316" y="110" width="1" height="18" fill="url(#gv)"/>
<rect x="0" y="148" width="28" height="1" fill="url(#gh)"/>
<rect x="0" y="168" width="28" height="1" fill="url(#gh)"/>
<rect x="0" y="188" width="28" height="1" fill="url(#gh)"/>
<rect x="0" y="207" width="28" height="1" fill="url(#gh)"/>
<rect x="0" y="227" width="28" height="1" fill="url(#gh)"/>
<rect x="0" y="247" width="28" height="1" fill="url(#gh)"/>
<rect x="0" y="267" width="28" height="1" fill="url(#gh)"/>
<rect x="0" y="287" width="28" height="1" fill="url(#gh)"/>
<rect x="0" y="307" width="28" height="1" fill="url(#gh)"/>
<rect x="0" y="327" width="28" height="1" fill="url(#gh)"/>
<rect x="0" y="347" width="28" height="1" fill="url(#gh)"/>
<rect x="0" y="367" width="28" height="1" fill="url(#gh)"/>
<rect x="0" y="387" width="28" height="1" fill="url(#gh)"/>
<rect x="0" y="406" width="28" height="1" fill="url(#gh)"/>
<rect x="0" y="425" width="28" height="1" fill="url(#gh)"/>
<rect x="0" y="444" width="28" height="1" fill="url(#gh)"/>
<rect x="0" y="463" width="28" height="1" fill="url(#gh)"/>
<rect x="0" y="482" width="28" height="1" fill="url(#gh)"/>
<rect x="0" y="502" width="28" height="1" fill="url(#gh)"/>
<rect x="0" y="521" width="28" height="1" fill="url(#gh)"/>
<rect x="0" y="541" width="28" height="1" fill="url(#gh)"/>
<rect x="0" y="561" width="28" height="1" fill="url(#gh)"/>
<rect x="0" y="580" width="28" height="1" fill="url(#gh)"/>
<rect x="0" y="600" width="28" height="1" fill="url(#gh)"/>
<rect x="0" y="619" width="28" height="1" fill="url(#gh)"/>
<rect x="0" y="638" width="28" height="1" fill="url(#gh)"/>
<rect x="0" y="657" width="28" height="1" fill="url(#gh)"/>
<rect x="0" y="676" width="28" height="1" fill="url(#gh)"/>
<rect x="0" y="695" width="28" height="1" fill="url(#gh)"/>
<rect x="0" y="714" width="28" height="1" fill="url(#gh)"/>
<rect x="0" y="128" width="1344" height="1" fill="#9e9e9e"/>
<rect x="28" y="110" width="1" height="607" fill="#9e9e9e"/>
<rect x="764" y="127" width="93" height="2" fill="#217346"/>
<rect x="488" y="307" width="185" height="1" fill="#000"/>
<rect x="488" y="482" width="93" height="1" fill="#000"/>
</svg>
<div class="hdr" style="left:29px;top:110.5px;width:92px;line-height:17px;font-size:15.5px">A</div>
<div class="hdr" style="left:121px;top:110.5px;width:92px;line-height:17px;font-size:15.5px">B</div>
<div class="hdr" style="left:213px;top:110.5px;width:92px;line-height:17px;font-size:15.5px">C</div>
<div class="hdr" style="left:305px;top:110.5px;width:92px;line-height:17px;font-size:15.5px">D</div>
<div class="hdr" style="left:397px;top:110.5px;width:92px;line-height:17px;font-size:15.5px">E</div>
<div class="hdr" style="left:489px;top:110.5px;width:92px;line-height:17px;font-size:15.5px">F</div>
<div class="hdr" style="left:581px;top:110.5px;width:92px;line-height:17px;font-size:15.5px">G</div>
<div class="hdr" style="left:673px;top:110.5px;width:92px;line-height:17px;font-size:15.5px">H</div>
<div class="hdr" style="left:765px;top:110.5px;width:92px;line-height:17px;font-size:15.5px">I</div>
<div class="hdr" style="left:857px;top:110.5px;width:92px;line-height:17px;font-size:15.5px">J</div>
<div class="hdr" style="left:949px;top:110.5px;width:92px;line-height:17px;font-size:15.5px">K</div>
<div class="hdr" style="left:1041px;top:110.5px;width:92px;line-height:17px;font-size:15.5px">L</div>
<div class="hdr" style="left:1133px;top:110.5px;width:92px;line-height:17px;font-size:15.5px">M</div>
<div class="hdr" style="left:1225px;top:110.5px;width:92px;line-height:17px;font-size:15.5px">N</div>
<div class="hdr" style="left:0;top:130px;width:28px;line-height:20px">1</div>
<div class="hdr" style="left:0;top:150px;width:28px;line-height:20px">2</div>
<div class="hdr" style="left:0;top:170px;width:28px;line-height:20px">3</div>
<div class="hdr" style="left:0;top:190px;width:28px;line-height:19px">4</div>
<div class="hdr" style="left:0;top:209px;width:28px;line-height:20px">5</div>
<div class="hdr" style="left:0;top:229px;width:28px;line-height:20px">6</div>
<div class="hdr" style="left:0;top:249px;width:28px;line-height:20px">7</div>
<div class="hdr" style="left:0;top:269px;width:28px;line-height:20px">8</div>
<div class="hdr" style="left:0;top:289px;width:28px;line-height:20px">9</div>
<div class="hdr" style="left:0;top:309px;width:28px;line-height:20px">10</div>
<div class="hdr" style="left:0;top:329px;width:28px;line-height:20px">11</div>
<div class="hdr" style="left:0;top:349px;width:28px;line-height:20px">12</div>
<div class="hdr" style="left:0;top:369px;width:28px;line-height:20px">13</div>
<div class="hdr" style="left:0;top:389px;width:28px;line-height:19px">14</div>
<div class="hdr" style="left:0;top:408px;width:28px;line-height:19px">15</div>
<div class="hdr" style="left:0;top:427px;width:28px;line-height:19px">16</div>
<div class="hdr" style="left:0;top:446px;width:28px;line-height:19px">17</div>
<div class="hdr" style="left:0;top:465px;width:28px;line-height:19px">18</div>
<div class="hdr" style="left:0;top:484px;width:28px;line-height:20px">19</div>
<div class="hdr" style="left:0;top:504px;width:28px;line-height:19px">20</div>
<div class="hdr" style="left:0;top:523px;width:28px;line-height:20px">21</div>
<div class="hdr" style="left:0;top:543px;width:28px;line-height:20px">22</div>
<div class="hdr" style="left:0;top:563px;width:28px;line-height:19px">23</div>
<div class="hdr" style="left:0;top:582px;width:28px;line-height:20px">24</div>
<div class="hdr" style="left:0;top:602px;width:28px;line-height:19px">25</div>
<div class="hdr" style="left:0;top:621px;width:28px;line-height:19px">26</div>
<div class="hdr" style="left:0;top:640px;width:28px;line-height:19px">27</div>
<div class="hdr" style="left:0;top:659px;width:28px;line-height:19px">28</div>
<div class="hdr" style="left:0;top:678px;width:28px;line-height:19px">29</div>
<div class="hdr" style="left:0;top:697px;width:28px;line-height:19px">30</div>
<div class="t cell b" style="left:120px;width:552px;text-align:center;top:130px;line-height:17px;font-size:14.67px;">Sample income statement</div>
<div class="t cell b" style="left:120px;width:552px;text-align:center;top:150px;line-height:17px;font-size:14.67px;">Company name</div>
<div class="t cell b" style="left:120px;width:552px;text-align:center;top:170px;line-height:17px;font-size:14.67px;">Income statement</div>
<div class="t cell i" style="left:120px;width:552px;text-align:center;top:190px;line-height:17px;font-size:12.5px;letter-spacing:0">For one year ending month day, year</div>
<div class="t cell b" style="left:123px;top:229px;line-height:17px;font-size:15px;">REVENUES</div>
<div class="t cell " style="left:215px;top:269px;line-height:17px;">Revenue stream 1</div>
<div class="t cell " style="left:215px;top:289px;line-height:17px;">Revenue stream 2</div>
<div class="t cell b" style="left:216px;top:309px;line-height:17px;font-size:15px;">Total revenues</div>
<div class="t cell " style="right:792px;top:269px;line-height:17px;">35,00,000</div>
<div class="t cell " style="right:792px;top:289px;line-height:17px;">20,00,000</div>
<div class="t cell b" style="right:701px;top:309px;line-height:17px;font-size:15px;letter-spacing:-0.2px">55,00,000</div>
<div class="t cell b" style="left:123px;top:369px;line-height:17px;font-size:15px;">COST OF SALES</div>
<div class="t cell " style="left:215px;top:389px;line-height:17px;">Direct cost 1</div>
<div class="t cell " style="right:792px;top:389px;line-height:17px;">18,70,000</div>
<div class="t cell " style="left:215px;top:408px;line-height:17px;">Direct cost 2</div>
<div class="t cell " style="right:792px;top:408px;line-height:17px;">14,02,500</div>
<div class="t cell " style="left:215px;top:427px;line-height:17px;">Direct cost 3</div>
<div class="t cell " style="right:792px;top:427px;line-height:17px;">4,67,500</div>
<div class="t cell " style="left:215px;top:446px;line-height:17px;">Direct cost 4</div>
<div class="t cell " style="right:792px;top:446px;line-height:17px;">2,33,750</div>
<div class="t cell " style="left:215px;top:465px;line-height:17px;">Direct cost 5</div>
<div class="t cell " style="right:792px;top:465px;line-height:17px;">1,59,401</div>
<div class="t cell b" style="left:216px;top:484px;line-height:17px;font-size:15px;">Total cost of sales</div>
<div class="t cell b" style="right:701px;top:484px;line-height:17px;font-size:15px;letter-spacing:-0.2px">41,33,151</div>
<div class="t cell b" style="left:123px;top:523px;line-height:17px;font-size:15px;">GROSS PROFIT</div>
<div class="t cell b" style="right:701px;top:523px;line-height:17px;font-size:15px;letter-spacing:-0.2px">13,66,849</div>
<div class="t cell b i" style="left:215px;top:543px;line-height:17px;color:#55553a;font-size:13px;letter-spacing:-0.1px">Gross margin (% of sales)</div>
<div class="t cell b i" style="right:698px;top:543px;line-height:17px;color:#55553a;font-size:13px;">25%</div>
<div class="t cell b" style="left:124px;top:582px;line-height:17px;font-size:14.85px;">SELLING, GENERAL &amp; ADMINISTRATIVE EXPENSES</div>
<div class="t cell " style="left:215px;top:602px;line-height:17px;">Management and office salaries and benefits</div>
<div class="t cell " style="right:792px;top:602px;line-height:17px;">6,69,999</div>
<div class="t cell " style="left:215px;top:621px;line-height:17px;">Advertising and marketing</div>
<div class="t cell " style="right:792px;top:621px;line-height:17px;">1,35,000</div>
<div class="t cell " style="left:215px;top:640px;line-height:17px;">Bad debts</div>
<div class="t cell " style="right:792px;top:640px;line-height:17px;">10,000</div>
<div class="t cell " style="left:215px;top:659px;line-height:17px;">Office and general</div>
<div class="t cell " style="right:792px;top:659px;line-height:17px;">75,000</div>
<div class="t cell " style="left:215px;top:678px;line-height:17px;">Occupancy</div>
<div class="t cell " style="right:792px;top:678px;line-height:17px;">45,000</div>
<div class="t cell " style="left:215px;top:697px;line-height:17px;">Professional fees</div>
<div class="t cell " style="right:792px;top:697px;line-height:17px;">35,000</div>
<div class="a" style="left:1344px;top:110px;width:22px;height:607px;background:#e6e6e6"></div>
<div class="a" style="left:1348px;top:127px;width:15px;height:590px;background:#f0f0f0"></div>
<div class="a" style="left:1344px;top:128px;width:1px;height:590px;background:#9e9e9e"></div>
<div class="a" style="left:1348px;top:112px;width:15px;height:15px;background:#fff;border:1px solid #ababab"></div>
<svg class="a" style="left:1351px;top:116px" width="9" height="6" viewBox="0 0 9 6"><path d="M0.5 5 H8.5 L4.5 1 Z" fill="#333"/></svg>
<div class="a" style="left:1348px;top:127px;width:15px;height:338px;background:#fff;border:1px solid #9e9e9e;border-top:2px solid #9e9e9e"></div>
<div class="a" style="left:1348px;top:702px;width:15px;height:15px;background:#fff;border:1px solid #ababab"></div>
<svg class="a" style="left:1351px;top:706px" width="9" height="6" viewBox="0 0 9 6"><path d="M0.5 1 H8.5 L4.5 5 Z" fill="#333"/></svg>
<div class="a" style="left:0;top:717px;width:1366px;height:29px;background:#e6e6e6;border-top:1px solid #9e9e9e;border-bottom:1px solid #c6c6c6"></div>
<svg class="a" style="left:20px;top:724px" width="50" height="14" viewBox="0 0 50 14"><path d="M11 3 V11 L7 7 Z" fill="#bdbdbd"/><path d="M36 3 V11 L40 7 Z" fill="#bdbdbd"/></svg>
<div class="a" style="left:100px;top:721px;width:1px;height:20px;background:#a0a0a0"></div>
<div class="t" style="left:119px;top:723px;font-size:13px;color:#333">The income statement explained</div>
<div class="a" style="left:326px;top:721px;width:1px;height:20px;background:#a0a0a0"></div>
<div class="t" style="left:344px;top:723px;font-size:13px;color:#333">Income statement template</div>
<div class="a" style="left:520px;top:717px;width:183px;height:25px;background:#fff;border-left:1px solid #ababab;border-right:1px solid #ababab;border-bottom:2px solid #217346"></div>
<div class="t b" style="left:532px;top:723px;font-size:13px;color:#217346">Income statement sample</div>
<svg class="a" style="left:734px;top:721px" width="20" height="20" viewBox="734 721 20 20"><circle cx="744" cy="731" r="7.4" fill="none" stroke="#7a7a7a" stroke-width="1.2"/><path d="M744 727 V735 M740 731 H748" stroke="#707070" stroke-width="2"/></svg>
<div class="a" style="left:819px;top:726px;width:2px;height:2px;background:#a6a6a6"></div>
<div class="a" style="left:819px;top:730px;width:2px;height:2px;background:#a6a6a6"></div>
<div class="a" style="left:819px;top:734px;width:2px;height:2px;background:#a6a6a6"></div>
<div class="a" style="left:836px;top:724px;width:508px;height:15px;background:#f0f0f0"></div>
<div class="a" style="left:850px;top:724px;width:445px;height:15px;background:#fff;border:1px solid #ababab;border-left:2px solid #9e9e9e"></div>
<div class="a" style="left:836px;top:724px;width:15px;height:15px;background:#fff;border:1px solid #ababab"></div>
<svg class="a" style="left:839px;top:726px" width="10" height="10" viewBox="0 0 10 10"><path d="M6.5 1 V9 L2.5 5 Z" fill="#222"/></svg>
<div class="a" style="left:1330px;top:724px;width:15px;height:15px;background:#fff;border:1px solid #ababab"></div>
<svg class="a" style="left:1333px;top:726px" width="10" height="10" viewBox="0 0 10 10"><path d="M3.5 1 V9 L7.5 5 Z" fill="#222"/></svg>
<div class="a" style="left:0;top:746px;width:1366px;height:21px;background:#f3f3f3"></div>
<div class="a" style="left:0;top:767px;width:1366px;height:1px;background:#fdfdfd"></div>
<div class="t" style="left:11px;top:750px;font-size:11.5px;color:#333">Ready</div>
<svg class="a" style="left:55px;top:745px" width="30" height="23" viewBox="55 745 30 23">
<g fill="none" stroke="#3a3a3a" stroke-width="1.3"><path d="M65.5 750.6 A5.6 5.6 0 0 0 66.5 761.8" stroke-dasharray="2.6 1.8"/>
<path d="M67.5 749 V754.6 M65.9 753 L67.5 754.6 L69.1 753 M67.5 754.6 H74 M72.3 752.8 L74.1 754.6 L72.3 756.4"/>
<path d="M69 757.2 L76.5 763.6 M76.2 757 L68.8 763.4" stroke-width="1.9"/></g></svg>
<div class="t b" style="left:80px;top:750px;font-size:11px;letter-spacing:-0.15px;color:#333">Accessibility: Investigate</div>
<div class="a" style="left:1066px;top:745px;width:40px;height:21px;background:#c6c6c6"></div>
<svg class="a" style="left:1060px;top:746px" width="306" height="22" viewBox="1060 746 306 22">
<g fill="none" stroke="#6a6a6a" stroke-width="1">
<rect x="1079.5" y="749.5" width="12" height="12"/><path d="M1083.5 749.5 V761.5 M1087.5 749.5 V761.5 M1079.5 753.5 H1091.5 M1079.5 757.5 H1091.5"/>
<rect x="1119.5" y="749.5" width="13" height="12"/><rect x="1122.5" y="751.5" width="7" height="8"/><path d="M1124 753.5 H1128 M1124 755.5 H1128 M1124 757.5 H1128"/>
<rect x="1159.5" y="749.5" width="13" height="12"/><path d="M1163.5 749.5 V756.5 M1159.5 756.5 H1167.5 V749.5"/>
<path d="M1192 755.5 H1199 M1205 755.5 H1304 M1310 755.5 H1317 M1313.5 752 V759"/>
</g><rect x="1253" y="750" width="5" height="11" fill="#444"/></svg>
<div class="t" style="left:1331px;top:750px;font-size:11.3px;color:#333">100%</div>
</body></html>
